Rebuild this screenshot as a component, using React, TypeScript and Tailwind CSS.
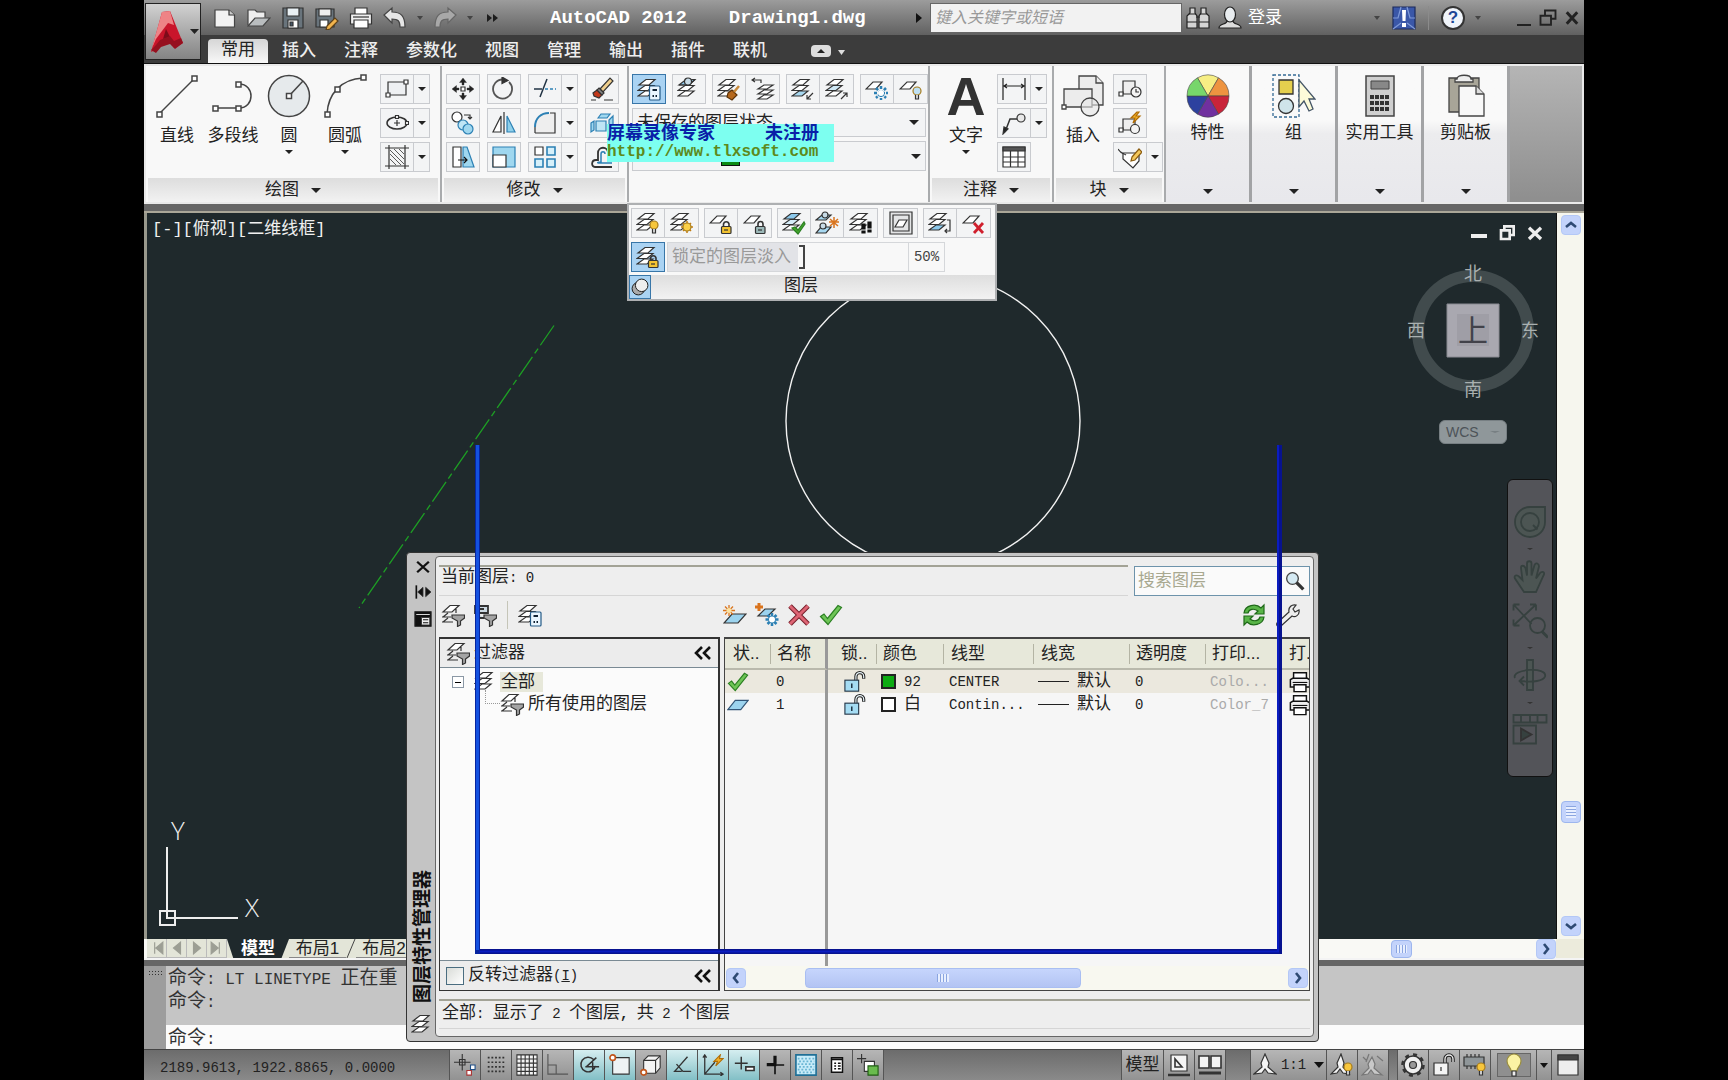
import React from 'react';
import clsx from 'clsx';

interface IconProps {
  className?: string;
}

interface SheetsProps extends IconProps {
  fills?: [string, string, string];
  children?: React.ReactNode;
}

/* Shared svg wrapper, 24 unit grid */
const Svg: React.FC<{ className?: string; children: React.ReactNode }> = ({ className = 'w-6 h-6', children }) => (
  <svg viewBox="0 0 24 24" className={clsx('shrink-0', className)} fill="none" stroke="#333" strokeWidth="1.2" aria-hidden="true">
    {children}
  </svg>
);

/* Three stacked sheets, the base of every layer icon */
const Sheets: React.FC<SheetsProps> = ({ className, fills = ['#fff', '#fff', '#fff'], children }) => (
  <Svg className={className}>
    <path d="M1 19h10l6-5H8z" fill={fills[2]} />
    <path d="M1 13.500h10l6-5H8z" fill={fills[1]} />
    <path d="M2 8h10l6-5.500H9z" fill={fills[0]} />
    {children}
  </Svg>
);

const OneSheet: React.FC<SheetsProps> = ({ className, fills = ['#fff', '#fff', '#fff'], children }) => (
  <Svg className={className}>
    <path d="M1 12h10l6-7H8z" fill={fills[0]} />
    {children}
  </Svg>
);

const Padlock = ({ open, color = '#f2c230' }: { open?: boolean; color?: string }) => (
  <>
    <path d={open ? 'M15 16v-3a2.500 2.500 0 0 1 5 0v3' : 'M14.500 16v-3a2.800 2.800 0 0 1 5.500 0v3'} strokeWidth="1.6" />
    <rect x="12.500" y="15.500" width="9.500" height="7" rx="1" fill={color} />
    <path d="M15 19h4" />
  </>
);

const Bulb = ({ color = '#f7c63c' }: { color?: string }) => (
  <>
    <circle cx="18" cy="14" r="4" fill={color} stroke="#a67b1b" />
    <path d="M16.500 18v4h3v-4" fill="#ddd" />
  </>
);

const Funnel = () => <path d="M11 12h12.500v3l-4 3v4l-3 1.500v-5.500l-5.500-3z" fill="#a4a4a4" stroke="#333" />;

const FilterIcon: React.FC<IconProps> = ({ className }) => (
  <Svg className={className}>
    <path d="M2 9h9l7-6.500H9zM1 14h9M1 19h11M2 14l5-4M2 19l5-4M15 6v4" fill="#fff" />
    <Funnel />
  </Svg>
);

const PropsIcon: React.FC<IconProps> = ({ className }) => (
  <Sheets className={className}>
    <rect x="12.500" y="9" width="10.500" height="14" rx="1" fill="#eaf6ff" stroke="#245a86" />
    <path d="M15.500 13h4.500M15.500 19h1.500M18.500 19h1.500" stroke="#123" strokeWidth="1.8" />
  </Sheets>
);

const CheckIcon: React.FC<IconProps> = ({ className }) => (
  <Svg className={className}>
    <path d="M1.500 13.500l3.500-2.500 3.500 4.500L19 2.500l3.500 2L9 21.500z" fill="#6ec556" stroke="#2b7f22" />
  </Svg>
);

const Caret: React.FC<IconProps> = ({ className = 'w-2 h-1 text-[#222]' }) => (
  <svg viewBox="0 0 10 5" className={clsx('shrink-0', className)} fill="currentColor" aria-hidden="true" preserveAspectRatio="none">
    <path d="M0 0h10L5 5z" />
  </svg>
);

const OpenLock: React.FC<IconProps> = ({ className }) => (
  <Svg className={className}>
    <path d="M13 11V6a4 4 0 0 1 8.500 0v2.500" stroke="#222" strokeWidth="3.500" />
    <path d="M13 11V6a4 4 0 0 1 8.500 0v2" stroke="#e8f4fa" strokeWidth="1.300" />
    <rect x="1" y="10" width="15" height="12" fill="#a5dcf3" stroke="#234" />
    <path d="M8.500 13.500v5" stroke="#123" strokeWidth="1.500" />
  </Svg>
);

const PrinterIcon: React.FC<IconProps> = ({ className }) => (
  <Svg className={className}>
    <path d="M5 9V2h14v7" fill="#fff" stroke="#111" strokeWidth="1.600" />
    <path d="M1.500 9.500L4 8h16l2.500 1.500v8H1.500z" fill="#eee" stroke="#111" strokeWidth="1.600" />
    <path d="M5.500 15h13v7.500h-13z" fill="#fff" stroke="#111" strokeWidth="1.600" />
    <path d="M4 12.500h16" stroke="#111" />
  </Svg>
);

interface ToolProps {
  label: string;
  active?: boolean;
  split?: boolean;
  children: React.ReactNode;
}

/* Small framed ribbon button, optionally with a flyout arrow */
const Tool: React.FC<ToolProps> = ({ label, active, split, children }) => (
  <div className={clsx('flex h-[30px] shrink-0 border', active ? 'border-[#3876a8] bg-[#aad3f3]' : 'border-[#c9cbcf] bg-[#f3f4f5]', split ? 'w-[50px]' : 'w-[34px]')}>
    <button aria-label={label} className="flex flex-1 items-center justify-center">{children}</button>
    {split && (
      <button aria-label={`${label} ▾`} className="flex w-4 items-center justify-center border-l border-[#c9cbcf]">
        <Caret className="h-1 w-2 text-[#222]" />
      </button>
    )}
  </div>
);

const ToolGroup: React.FC<{ items: { label: string; icon: React.ReactNode }[] }> = ({ items }) => (
  <div className="flex h-[30px] divide-x divide-[#c9cbcf] border border-[#c9cbcf] bg-[#f3f4f5]">
    {items.map((item) => (
      <button key={item.label} aria-label={item.label} className="flex w-[33px] items-center justify-center">{item.icon}</button>
    ))}
  </div>
);

const BigTool: React.FC<{ label: string; arrow?: boolean; children: React.ReactNode }> = ({ label, arrow, children }) => (
  <button className="flex w-14 shrink-0 flex-col items-center">
    {children}
    <span className="mt-2 text-[17px] leading-5 whitespace-nowrap">{label}</span>
    {arrow && <Caret className="mt-1 h-1 w-2 text-[#222]" />}
  </button>
);

const RibbonPanel: React.FC<{ title?: string; width: string; children: React.ReactNode }> = ({ title, width, children }) => (
  <section className={clsx('flex shrink-0 flex-col border-r-2 border-[#a9abad] bg-[#f8f8f8] pt-2', width)}>
    <div className="flex flex-1 gap-[7px] pl-1">{children}</div>
    {title && (
      <button className="mx-[2px] flex h-6 items-center justify-center gap-3 bg-linear-to-b from-[#dddddd] to-[#f2f2f2] text-[17px] leading-5">
        {title}
        <Caret className="h-[5px] w-[10px] text-[#222]" />
      </button>
    )}
  </section>
);

const ClosedPanel: React.FC<{ title: string; children: React.ReactNode }> = ({ title, children }) => (
  <button className="flex w-[86px] shrink-0 flex-col items-center border-r-[3px] border-[#a2a3a5] bg-linear-to-b from-[#f9f9f9] from-40% via-[#ececee] to-[#e8e8ec] pt-1">
    {children}
    <span className="mt-[5px] text-[17px] leading-5 whitespace-nowrap">{title}</span>
    <Caret className="mt-auto mb-2 h-[5px] w-[10px] text-[#222]" />
  </button>
);

const ScrollButton: React.FC<{ label: string; d: string }> = ({ label, d }) => (
  <button aria-label={label} className="flex h-5 w-5 shrink-0 items-center justify-center rounded-sm border border-[#b4c8f6] bg-[#c3d3fb]">
    <svg viewBox="0 0 12 12" className="h-3 w-3" fill="none" stroke="#2e4a73" strokeWidth="2.600"><path d={d} /></svg>
  </button>
);

const TitleBar = () => (
  <header className="flex h-[35px] items-center bg-linear-to-b from-[#9c9c9c] to-[#616161] pl-[69px] pr-[5px]">
    <div className="flex items-center gap-[10px]">
      <button aria-label="新建"><Svg><path d="M2 4h14l5.500 5v12H2z" fill="#f2f2f2" stroke="#444" /><path d="M16 4v5h5.500" fill="#ccc" /></Svg></button>
      <button aria-label="打开"><Svg><path d="M1 19V4h7l2 2h8v5" fill="#eee" stroke="#444" /><path d="M1 20l7-8h15l-7 8z" fill="#b9bdbf" stroke="#444" /></Svg></button>
      <button aria-label="保存"><Svg><path d="M2 2h20v20H2z" fill="#69747c" stroke="#333" /><path d="M6 2h12v8H6z" fill="#e8f0f4" /><path d="M7 14h10v8H7z" fill="#fff" /><path d="M9 16h3v4H9z" fill="#456" /></Svg></button>
      <button aria-label="另存为"><Svg><path d="M1 3h18v18H1z" fill="#69747c" stroke="#333" /><path d="M4 3h12v7H4z" fill="#eee" /><path d="M5 14h8v7H5z" fill="#fff" /><path d="M12 20l8-8 3 3-8 8-4 1z" fill="#f2b44d" stroke="#5c401a" /></Svg></button>
      <button aria-label="打印"><Svg><path d="M6 8V2h12v6" fill="#fff" /><path d="M1.500 8h21v10h-21z" fill="#f0f0f0" /><path d="M5 14h14v8H5z" fill="#fff" /><path d="M4 11h16" /></Svg></button>
      <button aria-label="放弃"><Svg><path d="M1 9l8-7v4c9 0 13 4 13 15h-5c0-6-2-8-8-8v4z" fill="#e6e6e6" stroke="#444" /></Svg></button>
      <Caret className="h-1 w-[6px] text-[#444]" />
      <button aria-label="重做"><Svg><path d="M23 9l-8-7v4C6 6 2 10 2 21h5c0-6 2-8 8-8v4z" fill="#a8a8a8" stroke="#666" /></Svg></button>
      <Caret className="h-1 w-[6px] text-[#444]" />
      <button aria-label="更多"><svg viewBox="0 0 12 8" className="ml-1 h-2 w-3" fill="#1c1c1c"><path d="M0 0l5 4-5 4zM6 0l5 4-5 4z" /></svg></button>
    </div>
    <h1 className="ml-[51px] flex gap-[42px] pt-px font-['Liberation_Mono',monospace] text-[19px] leading-6 font-bold whitespace-nowrap text-white">
      <span>AutoCAD 2012</span>
      <span>Drawing1.dwg</span>
    </h1>
    <svg viewBox="0 0 6 10" className="ml-auto h-[10px] w-[6px]" fill="#111"><path d="M0 0l6 5-6 5z" /></svg>
    <input aria-label="搜索" placeholder="键入关键字或短语" className="ml-2 h-[30px] w-[252px] border border-[#666] bg-[#f2f2f2] px-1 text-[16px] italic placeholder:text-[#999]" />
    <button aria-label="查找" className="ml-1"><Svg><path d="M4 2h5v5l2 3v12H1V10l3-3zM15 2h5v5l3 3v12H13V10l2-3z" fill="#d4d4d4" stroke="#222" /><path d="M3 8h7M14 8h7M1 16h10M13 16h10M10 11h4" stroke="#222" /></Svg></button>
    <button className="ml-2 flex items-center gap-[6px] text-[17px] leading-5 text-white">
      <Svg className="h-6 w-6"><path d="M1 22c0-5 8-3 8-7h6c0 4 8 2 8 7z" fill="#ddd" stroke="#222" /><ellipse cx="12" cy="8.500" rx="5.500" ry="7.500" fill="#e8ecef" stroke="#222" /></Svg>
      登录
    </button>
    <Caret className="ml-[92px] h-1 w-[6px] text-[#444]" />
    <button aria-label="通讯中心" className="ml-3"><Svg><path d="M1 1h22v22H1z" fill="#3a57a8" stroke="#1c2b5c" /><path d="M1 12h5l3-11M23 12h-5l-3-11M1 23l8-6M23 23l-8-6" stroke="#7f9ad8" /><path d="M10 4h4l-.5 11h-3zM10 17h4v4h-4z" fill="#fff" stroke="none" /></Svg></button>
    <span className="ml-3 h-6 w-px bg-[#8b8b8b]" />
    <button aria-label="帮助" className="ml-3 flex h-6 w-6 items-center justify-center rounded-full border-2 border-[#333] bg-[#f0f4fa] text-[17px] leading-5 font-bold text-[#1d4695]">?</button>
    <Caret className="ml-[10px] h-1 w-[6px] text-[#444]" />
    <button aria-label="最小化" className="-mt-1 mr-2 ml-9 h-5 w-[14px] border-b-2 border-[#222]" />
    <button aria-label="还原"><Svg className="h-[18px] w-[18px]"><path d="M8 8V2h14v11h-6M2 9h14v12H2z" stroke="#222" strokeWidth="2.500" /></Svg></button>
    <button aria-label="关闭" className="ml-2"><Svg className="h-[14px] w-[14px]"><path d="M3 2l18 20M21 2L3 22" stroke="#222" strokeWidth="5" /></Svg></button>
  </header>
);

const TABS = ['插入', '注释', '参数化', '视图', '管理', '输出', '插件', '联机'];

const TabRow = () => (
  <nav className="flex h-[29px] items-end border-b border-[#111] bg-[#3c3c3c] pl-16 text-[17px] leading-5 text-[#eee]">
    <button className="h-6 w-[60px] rounded-t-sm bg-linear-to-b from-[#d6d6d6] to-[#f8f8f8] pb-[2px] text-[#222]">常用</button>
    <div className="flex gap-7 pb-[2px] pl-[14px] font-medium">
      {TABS.map((tab) => <button key={tab}>{tab}</button>)}
    </div>
    <button aria-label="最小化功能区" className="mb-[6px] ml-11 flex h-3 w-5 items-center justify-center rounded-sm bg-[#ddd]">
      <svg viewBox="0 0 8 4" className="h-1 w-2" fill="#222"><path d="M0 4l4-4 4 4z" /></svg>
    </button>
    <Caret className="mb-2 ml-[7px] h-[5px] w-[7px] text-[#ddd]" />
  </nav>
);

const MODIFY = [
  { label: '移动', icon: <Svg><path d="M12 1l3.500 4.500H13V8h-2V5.500H8.500zM12 23l-3.500-4.500H11V16h2v2.500h2.500zM1 12l4.500-3.500V11H8v2H5.500v2.500zM23 12l-4.500 3.500V13H16v-2h2.500V8.500z" fill="#222" strokeWidth=".4" /><path d="M10 10h4v4h-4z" fill="#fff" /></Svg> },
  { label: '旋转', icon: <Svg><path d="M17 5a9.500 9.500 0 1 1-6-2.500" stroke="#555" strokeWidth="1.800" /><path d="M10 0l6 3.500-6 3z" fill="#333" /></Svg> },
  { label: '修剪', split: true, icon: <Svg><path d="M1 12h8M7 20L14 2" stroke="#234" strokeWidth="1.500" /><path d="M12 12h11" stroke="#2c80b4" strokeDasharray="3 2" strokeWidth="1.500" /></Svg> },
  { label: '删除', icon: <Svg><path d="M10 12L20 1l3 3-10 11z" fill="#f0cf8d" /><path d="M7 13l5 5-3 3-5-2-1-3z" fill="#c2391b" /><path d="M9 11l5 5-2 2-5-5z" fill="#888" /><path d="M1 23h5M14 23h9" /></Svg> },
  { label: '复制', icon: <Svg><circle cx="6" cy="6" r="5" fill="#fff" /><path d="M13 4h6v4M17 6l2 2 2-2" /><circle cx="12" cy="14" r="5" fill="#bfe5f5" stroke="#2c80b4" /><circle cx="17" cy="18" r="5" fill="#9fd7ef" stroke="#2c80b4" /></Svg> },
  { label: '镜像', icon: <Svg><path d="M9 5v16H1z" fill="#fff" /><path d="M15 5v16h8z" fill="#8fd0ea" stroke="#2c80b4" /><path d="M12 1v22" /></Svg> },
  { label: '圆角', split: true, icon: <Svg><path d="M2 22V16C2 7 8 2 16 2h6v20z" fill="#eee" stroke="none" /><path d="M2 22v-6" /><path d="M2 16C2 7 8 2 16 2" stroke="#2c80b4" strokeWidth="2" /><path d="M17 2h5v20H2" /></Svg> },
  { label: '分解', icon: <Svg><path d="M6 10h10v10H6z" fill="#bfe5f5" stroke="#2c80b4" /><path d="M8 7l3-4h9l-3 4zM19 9l4-4v9l-4 4zM1 12l3-2v9l-3 2z" fill="#9fd7ef" stroke="#2c80b4" /></Svg> },
  { label: '拉伸', icon: <Svg><path d="M2 2h8v20H2z" fill="#fff" /><path d="M12 2h4l7 20H12z" fill="#9fd7ef" stroke="#2c80b4" /><path d="M7 15h9M13 12l3 3-3 3" stroke="#111" /></Svg> },
  { label: '缩放', icon: <Svg><path d="M1 2h22v20H1z" fill="#9fd7ef" stroke="#2c80b4" /><path d="M1 10h13v12H1z" fill="#fff" /></Svg> },
  { label: '阵列', split: true, icon: <Svg><path d="M2 2h8v8H2z" fill="#fff" /><path d="M14 2h8v8h-8zM2 14h8v8H2zM14 14h8v8h-8z" fill="#d6f0fa" stroke="#2c80b4" strokeWidth="1.600" /></Svg> },
  { label: '偏移', icon: <Svg><path d="M22 22H5c-4 0-4-7 1-7h2V8c0-7 10-7 10 0" strokeWidth="1.800" /><path d="M22 18H9c-2 0-2-1 2-1V9c0-3 4-3 4 0" stroke="#2c80b4" strokeWidth="1.500" /></Svg> },
];

const Ribbon = () => (
  <div className="flex h-[140px] border-2 border-[#e9e9e9] bg-linear-to-b from-[#b5b5b5] to-[#8e8e8e]">
    <RibbonPanel title="绘图" width="w-[296px]">
      <div className="-ml-px flex">
        <BigTool label="直线"><svg viewBox="0 0 44 44" className="h-11 w-11" fill="#fff" stroke="#444" strokeWidth="1.500"><path d="M4 40L40 4" /><path d="M2 38h5v5H2zM37 2h5v5h-5z" /></svg></BigTool>
        <BigTool label="多段线"><svg viewBox="0 0 44 44" className="h-11 w-11" fill="none" stroke="#444" strokeWidth="1.500"><path d="M4 34h24c16 0 16-24 0-24" /><path d="M2 32h5v5H2zM25 32h5v5h-5zM25 8h5v5h-5z" fill="#fff" /></svg></BigTool>
        <BigTool label="圆" arrow><svg viewBox="0 0 44 44" className="h-11 w-11" stroke="#444" strokeWidth="1.500"><circle cx="22" cy="22" r="20.500" fill="#e6eaec" /><path d="M22 22L36 7" /><path d="M19.500 19.500h5v5h-5z" fill="#fff" /></svg></BigTool>
        <BigTool label="圆弧" arrow><svg viewBox="0 0 44 44" className="h-11 w-11" fill="none" stroke="#444" strokeWidth="1.500"><path d="M4 40C5 20 18 5 40 4" /><path d="M2 38h5v5H2zM38 1h5v5h-5zM12 13h5v5h-5z" fill="#fff" /></svg></BigTool>
      </div>
      <div className="flex flex-col gap-1">
        <Tool label="矩形" split><Svg><path d="M3 5h18v13H3z" fill="#eef0f2" /><path d="M1 16h4v4H1zM19 3h4v4h-4z" fill="#fff" /></Svg></Tool>
        <Tool label="椭圆" split><Svg><ellipse cx="12" cy="12" rx="10" ry="6" strokeWidth="1.500" /><path d="M12 9v6M9 12h6M10.500 4.500h3v3h-3zM20.500 10.500h3v3h-3z" fill="#fff" /></Svg></Tool>
        <Tool label="图案填充" split><Svg><path d="M4 0v24M20 0v24M0 3h24M0 21h24" /><path d="M5 5l14 14M5 9l11 11M5 14l6 6M9 4l10 10M14 4l5 5" strokeWidth=".8" /></Svg></Tool>
      </div>
    </RibbonPanel>
    <RibbonPanel title="修改" width="w-[187px]">
      <div className="grid grid-cols-[34px_34px_50px_34px] content-start gap-x-[7px] gap-y-1">
        {MODIFY.map((tool) => <Tool key={tool.label} label={tool.label} split={tool.split}>{tool.icon}</Tool>)}
      </div>
    </RibbonPanel>
    <RibbonPanel width="w-[301px]">
      <div className="-ml-px flex flex-col gap-1">
        <div className="flex gap-[6px]">
          <Tool label="图层特性" active><PropsIcon /></Tool>
          <Tool label="置为当前"><Sheets fills={['#8cc9ec', '#fff', '#fff']}><path d="M2 8h10l6-5.500" /><circle cx="11" cy="4.500" r="3.500" fill="#c8dbe6" /></Sheets></Tool>
          <ToolGroup items={[
            { label: '匹配', icon: <Sheets><path d="M11 16l4-3 5 5-5 5-5-3z" fill="#b5681d" stroke="#5c3208" /><path d="M17 15l5-6" strokeWidth="2.500" stroke="#c98a3a" /></Sheets> },
            { label: '上一个', icon: <Svg><path d="M7 22h9l6-4H13zM7 17h9l6-4H13zM7 12h9l6-4H13z" fill="#fff" /><path d="M2 3h8v3M4 1L1 3l3 2" /></Svg> },
          ]} />
          <ToolGroup items={[
            { label: '隔离', icon: <Sheets fills={['#fff', '#fff', '#a8d8f0']}><path d="M22 16l-6 6M16 18v4h4" /></Sheets> },
            { label: '取消隔离', icon: <Sheets fills={['#fff', '#cfe8f5', '#fff']}><path d="M16 22l6-6M18 16h4v4" /></Sheets> },
          ]} />
          <ToolGroup items={[
            { label: '冻结', icon: <OneSheet><path d="M16 9v14M9 16h14M11 11l10 10M21 11L11 21" stroke="#2c80b4" strokeWidth="2.500" strokeDasharray="3 1" /><circle cx="16" cy="16" r="3" fill="#fff" stroke="none" /></OneSheet> },
            { label: '关闭', icon: <OneSheet><Bulb color="#bfe0f2" /></OneSheet> },
          ]} />
        </div>
        <div className="relative flex h-[29px] w-[294px] items-center border border-[#c9cbcf] bg-[#f3f4f5]">
          <select aria-label="图层状态" className="w-full appearance-none pl-1 text-[17px] leading-5"><option>未保存的图层状态</option></select>
          <Caret className="absolute right-[6px] h-[5px] w-[10px] text-[#222]" />
        </div>
        <div className="relative flex h-[30px] w-[294px] items-center border border-[#c9cbcf] bg-[#f3f4f5]">
          <span className="mt-1 ml-[88px] h-4 w-[19px] border border-[#111] bg-[#0a8a14]" />
          <select aria-label="图层" className="flex-1 appearance-none pl-4 font-['Liberation_Mono',monospace] text-[14px]"><option>0</option></select>
          <Caret className="absolute right-1 h-[5px] w-[10px] text-[#222]" />
        </div>
      </div>
    </RibbonPanel>
    <RibbonPanel title="注释" width="w-[124px]">
      <div className="pl-1 -mr-1">
        <BigTool label="文字" arrow><span className="flex h-11 items-center text-[54px] leading-[44px] font-bold text-[#333]">A</span></BigTool>
      </div>
      <div className="flex flex-col gap-1">
        <Tool label="标注" split><Svg><path d="M1 1v22M23 1v22M2 9h20M5 7L2 9l3 2M19 7l3 2-3 2" stroke="#222" /></Svg></Tool>
        <Tool label="引线" split><Svg><path d="M3 21L8 8h8" strokeWidth="1.500" /><path d="M1 23l1-7 4 2z" fill="#222" /><circle cx="19" cy="7" r="4" fill="#e8e8e8" /></Svg></Tool>
        <Tool label="表格"><Svg><path d="M1 2h22v20H1z" fill="#fff" /><path d="M1 2h22v4H1z" fill="#555" /><path d="M1 12h22M1 17h22M8.500 6v16M16 6v16" /></Svg></Tool>
      </div>
    </RibbonPanel>
    <RibbonPanel title="块" width="w-[112px]">
      <div className="-ml-[3px] -mr-[5px]">
        <BigTool label="插入"><svg viewBox="0 0 44 44" className="h-11 w-11" fill="#ececec" stroke="#444" strokeWidth="1.300"><path d="M18 2h17l7 7v22H18z" /><path d="M35 2v7h7" /><path d="M3 15h28v18H3z" /><circle cx="29" cy="33" r="9" fill="#e6e6e699" /><path d="M1 31h4v4H1z" fill="#fff" /></svg></BigTool>
      </div>
      <div className="flex flex-col gap-1">
        <Tool label="创建"><Svg><path d="M5 17V4h12v13H3" fill="#eee" /><circle cx="18" cy="15" r="5" fill="#f4f4f4" /><path d="M18 12v3h3M1 15h4v4H1z" fill="#fff" /></Svg></Tool>
        <Tool label="编辑"><Svg><path d="M5 19V8h12v11H3" fill="#eee" /><circle cx="17" cy="18" r="4.500" fill="#f4f4f4" /><path d="M1 17h4v4H1z" fill="#fff" /><path d="M19 1l-6 6h4l-2 5 7-7h-4l3-4z" fill="#f5b52b" stroke="#b06c05" /></Svg></Tool>
        <Tool label="编辑属性" split><Svg><path d="M5 8h16v8l-6 7-10-9z" fill="#fff" /><path d="M0 4c3 5 5 4 8 6" /><path d="M14 12l7-8 3 3-7 8-4 1z" fill="#f5c85a" stroke="#8b5d11" /></Svg></Tool>
      </div>
    </RibbonPanel>
    <ClosedPanel title="特性">
      <svg viewBox="-22 -22 44 44" className="mt-1 h-11 w-11" stroke="#444" strokeWidth=".6">
        <path d="M0 0L-10.500-18.200A21 21 0 0 1 10.500-18.200z" fill="#f6ee84" />
        <path d="M0 0L10.500-18.200A21 21 0 0 1 21 0z" fill="#ee9440" />
        <path d="M0 0H21A21 21 0 0 1 10.500 18.200z" fill="#c9243a" />
        <path d="M0 0L10.500 18.200A21 21 0 0 1-10.500 18.200z" fill="#70309f" />
        <path d="M0 0L-10.500 18.200A21 21 0 0 1-21 0z" fill="#2d419f" />
        <path d="M0 0H-21A21 21 0 0 1-10.500-18.200z" fill="#77d66b" />
      </svg>
    </ClosedPanel>
    <ClosedPanel title="组">
      <svg viewBox="0 0 44 44" className="mt-1 h-11 w-11" stroke="#333" strokeWidth="1.300">
        <path d="M1 1h26v42H1z" fill="none" stroke="#356a94" strokeDasharray="3 2" />
        <path d="M7 6h14v14H7z" fill="#e5cf4e" />
        <circle cx="14" cy="32" r="7.500" fill="#cfe4ea" />
        <path d="M27 6v27l5-6 5 10 4-2-4-10h6z" fill="#fdfbd9" stroke="#456" />
      </svg>
    </ClosedPanel>
    <ClosedPanel title="实用工具">
      <svg viewBox="0 0 44 44" className="mt-1 h-11 w-11" stroke="#444">
        <path d="M8 2h28v40H8z" fill="#cfcfcf" strokeWidth="1.500" />
        <path d="M13 7h18v8H13z" fill="#888" />
        <path d="M12 23h20M12 29h20M12 35h20" stroke="#333" strokeWidth="4" strokeDasharray="4 1" />
      </svg>
    </ClosedPanel>
    <ClosedPanel title="剪贴板">
      <svg viewBox="0 0 44 44" className="mt-1 h-11 w-11" stroke="#444" strokeWidth="1.300">
        <path d="M5 4h30v34H5z" fill="#a8a598" />
        <path d="M13 5c0-5 14-5 14 0h2v3H11V5z" fill="#eee" />
        <path d="M15 12h17l8 8v22H15z" fill="#f8f8f8" />
        <path d="M32 12v8h8" fill="#ddd" />
      </svg>
    </ClosedPanel>
  </div>
);

/* Slide-out part of the layer panel */
const LayerFlyout = () => (
  <div className="absolute top-[203px] left-[483px] z-10 flex w-[370px] flex-col border-2 border-[#aeb0b2] bg-[#f8f8f8] pt-[3px]">
    <div className="flex gap-[5px] pl-[2px]">
      <ToolGroup items={[
        { label: '打开所有图层', icon: <Sheets><Bulb /></Sheets> },
        { label: '解冻所有图层', icon: <Sheets><path d="M17 10v12M11 16h12M13 12l8 8M21 12l-8 8" stroke="#c47e14" strokeWidth="1.500" /><circle cx="17" cy="16" r="4" fill="#fbd048" stroke="#a67b1b" /></Sheets> },
      ]} />
      <ToolGroup items={[
        { label: '锁定', icon: <OneSheet><Padlock /></OneSheet> },
        { label: '解锁', icon: <OneSheet><Padlock open color="#9cb8b8" /></OneSheet> },
      ]} />
      <ToolGroup items={[
        { label: '更改为当前图层', icon: <Sheets fills={['#8cc9ec', '#d5ecf8', '#fff']}><path d="M10 17l3-1 3 3 6-8 1 2-7 10z" fill="#43a62c" stroke="#2b7f22" /></Sheets> },
        { label: '复制到新图层', icon: <Svg><path d="M1 9h10l5-5H7zM1 22h10l5-6H6z" fill="#a8d8f0" /><circle cx="10" cy="4" r="3" fill="#c8dbe6" /><circle cx="8" cy="15" r="3" fill="#c8dbe6" /><path d="M19 6v11M14 11h10M15 8l8 7M23 8l-8 7" stroke="#d9731c" strokeWidth="1.500" /></Svg> },
        { label: '图层漫游', icon: <Sheets><path d="M13 13h3v5h-3zM13 20h3v2h-3zM19 11h3v6h-3zM19 19h3v2h-3z" fill="#111" stroke="#111" /></Sheets> },
      ]} />
      <ToolGroup items={[{ label: '隔离到当前视口', icon: <Svg><path d="M1 1h22v22H1zM4 4h16v16H4z" fill="#e4e5e6" /><path d="M6 16h8l4-7h-8z" fill="#fff" /></Svg> }]} />
      <ToolGroup items={[
        { label: '合并', icon: <Sheets fills={['#fff', '#fff', '#8cc9ec']}><path d="M19 9h3v11h-4M19 18l-2 2 2 2" /></Sheets> },
        { label: '删除图层', icon: <OneSheet><path d="M12 12l9 10M21 12l-9 10" stroke="#d01f2d" strokeWidth="2.800" /></OneSheet> },
      ]} />
    </div>
    <div className="mt-1 flex gap-[2px] pl-[2px]">
      <Tool label="锁定的图层淡入" active><Sheets fills={['#fff', '#fff', '#fff']}><Padlock /></Sheets></Tool>
      <div className="flex h-[30px] w-[278px] border border-[#d5d7da]">
        <div className="relative flex w-[240px] items-center">
          <label htmlFor="fade" className="absolute left-0 flex h-full w-[130px] items-center bg-[#e2e3e7] pl-1 text-[17px] leading-5 whitespace-nowrap text-[#999]">锁定的图层淡入</label>
          <input id="fade" type="range" defaultValue={56} className="relative h-6 w-full appearance-none bg-transparent [&::-webkit-slider-thumb]:h-6 [&::-webkit-slider-thumb]:w-[6px] [&::-webkit-slider-thumb]:appearance-none [&::-webkit-slider-thumb]:border-y-2 [&::-webkit-slider-thumb]:border-r-2 [&::-webkit-slider-thumb]:border-[#444]" />
        </div>
        <output htmlFor="fade" className="flex flex-1 items-center justify-center border-l border-[#d5d7da] font-['Liberation_Mono',monospace] text-[14px] text-[#444]">50%</output>
      </div>
    </div>
    <div className="mt-[3px] flex h-6 items-stretch bg-linear-to-b from-[#dedede] to-[#f2f2f2]">
      <button aria-label="固定面板" className="flex w-[22px] items-center justify-center border border-[#3876a8] bg-[#aad3f3]">
        <Svg className="h-5 w-5"><circle cx="10" cy="14" r="7.500" fill="#aaa" stroke="#222" /><circle cx="14" cy="10" r="7.500" fill="#eee" stroke="#222" /></Svg>
      </button>
      <h2 className="mr-11 flex-1 text-center text-[17px] leading-[22px]">图层</h2>
    </div>
  </div>
);

const Watermark = () => (
  <div className="absolute top-[124px] left-[463px] z-20 h-[38px] w-[227px] bg-[#7dfff0] leading-[19px] font-bold whitespace-nowrap">
    <p className="flex gap-[50px] text-[18px] text-[#0a1fa8]"><span>屏幕录像专家</span><span>未注册</span></p>
    <p className="font-['Liberation_Mono',monospace] text-[16px] text-[#5e8a1c]">http://www.tlxsoft.com</p>
  </div>
);

const ViewCube = () => (
  <div className="absolute top-[49px] right-[12px] flex flex-col items-center">
    <svg viewBox="0 0 142 138" className="h-[138px] w-[142px]" fill="#a9b0b0" fontSize="18" textAnchor="middle">
      <circle cx="71" cy="69" r="55" fill="none" stroke="#414b4d" strokeWidth="12" />
      <path d="M45 42h52v53H45z" fill="#a9a8b0" stroke="#8a8b92" />
      <path d="M55 52h32v32H55z" fill="#9f9ea6" />
      <text x="71" y="18">北</text>
      <text x="71" y="134">南</text>
      <text x="14" y="75">西</text>
      <text x="128" y="75">东</text>
      <text x="71" y="79" fontSize="30" fill="#42424a">上</text>
    </svg>
    <button className="mt-5 flex h-6 w-[68px] items-center justify-between rounded-md border border-[#777f83] bg-[#8f979a] px-[6px] text-[14px] leading-4 text-[#4d5358]">
      WCS
      <Caret className="h-[2px] w-[10px] text-[#777f83]" />
    </button>
  </div>
);

const NavBar = () => (
  <div className="absolute top-[266px] right-[3px] flex h-[298px] w-[46px] flex-col items-center justify-between rounded-md border border-[#111] bg-[#535459] pt-6 pb-7 text-[#3c4146]">
    <button aria-label="全导航控制盘"><Svg className="h-9 w-9"><path d="M12 2h10v10a10 10 0 1 1-10-10z" stroke="#36413f" fill="#4c5553" /><circle cx="12" cy="12" r="6" stroke="#36413f" /><path d="M14 14l3 3" stroke="#36413f" /></Svg></button>
    <Caret className="h-[2px] w-[6px] text-[#333]" />
    <button aria-label="平移"><Svg className="h-9 w-9"><path d="M8 22L2 13c-1-2 1-3 3-1l2 2L6 6c0-2 2-2 3 0l1 5V3c0-2 3-2 3 0v8l2-7c1-2 3-1 3 1l-2 8 3-4c2-1 3 0 2 2l-5 11z" stroke="#36413f" fill="#4c5553" /></Svg></button>
    <button aria-label="缩放"><Svg className="h-9 w-9"><path d="M1 1l12 13M16 1L1 15M1 1h4M1 1v4M16 1h-4M16 1v4M1 15v-4M1 15h4" stroke="#36413f" /><circle cx="17" cy="15" r="5" stroke="#36413f" /><path d="M20 19l4 4" stroke="#36413f" strokeWidth="2" /></Svg></button>
    <Caret className="h-[2px] w-[6px] text-[#333]" />
    <button aria-label="动态观察"><Svg className="h-9 w-9"><path d="M10 2h4v20h-4z" stroke="#36413f" fill="#4c5553" /><path d="M2 14c-3-6 22-8 20-1-1 3-8 4-16 3M8 13l-3 3 3 3" stroke="#36413f" /></Svg></button>
    <Caret className="h-[2px] w-[6px] text-[#333]" />
    <button aria-label="ShowMotion"><Svg className="h-9 w-9"><path d="M1 2h22v5H1zM6 2v5M12 2v5M17 2v5M1 9h15v12H1z" stroke="#36413f" /><path d="M6 11l7 4-7 4z" fill="#36413f" /></Svg></button>
  </div>
);

const DrawingArea = () => (
  <div className="flex min-h-0 flex-1 border-l-[3px] border-[#98988c]">
    <main className="relative flex-1 overflow-hidden bg-[#1f292c]">
      <svg className="absolute inset-0 h-full w-full" fill="none">
        <path d="M407 112.500L212 395" stroke="#1d9f24" strokeWidth="1.300" strokeDasharray="24 4 6 4" />
        <circle cx="786" cy="208" r="147" stroke="#f2f2f2" strokeWidth="1.400" />
      </svg>
      <p className="absolute top-[7px] left-[5px] font-['Liberation_Mono','Noto_Sans_CJK_SC',monospace] text-[17px] leading-5 text-[#f0f0f0]">[-][俯视][二维线框]</p>
      <div className="absolute top-3 right-[13px] flex items-center gap-3">
        <button aria-label="最小化视口" className="mt-[6px] h-1 w-4 bg-[#eee]" />
        <button aria-label="还原视口"><Svg className="h-4 w-4"><path d="M8 6V2h14v13h-4M3 8h13v13H3z" stroke="#eee" strokeWidth="4" /></Svg></button>
        <button aria-label="关闭视口"><Svg className="h-4 w-4"><path d="M3 4l18 17M21 4L3 21" stroke="#eee" strokeWidth="5" /></Svg></button>
      </div>
      <ViewCube />
      <NavBar />
      <svg className="absolute bottom-3 left-[10px] h-[120px] w-[120px]" viewBox="0 -8 120 120" fill="none" stroke="#eee" strokeWidth="2">
        <path d="M10 32v71h71" />
        <path d="M3 96h15v14H3z" />
        <g fill="#eee" stroke="none" fontSize="26" fontWeight="300" fontFamily="Open Sans, sans-serif">
          <text x="14" y="25">Y</text>
          <text x="88" y="102">X</text>
        </g>
      </svg>
    </main>
    <div className="flex w-7 flex-col items-center border-l border-[#111] bg-[#f6f6ee] pt-[2px] pb-[3px]">
      <ScrollButton label="向上滚动" d="M1 8l5-4 5 4" />
      <div className="flex-1" />
      <div className="h-[22px] w-5 rounded-sm border border-[#9db6ee] bg-[#c3d3fb] p-1">
        <div className="h-full w-full bg-[repeating-linear-gradient(#8aa5e0_0_1px,#e8efff_1px_3px)]" />
      </div>
      <div className="h-[93px]" />
      <ScrollButton label="向下滚动" d="M1 4l5 4 5-4" />
    </div>
  </div>
);

const LayoutTabs = () => (
  <div className="flex h-[21px] border-b-2 border-[#f4f4f4] bg-[#f9f9f5] pl-[3px] text-[17px] leading-[19px]">
    {['M4 1v10M11 1L5 6l6 5z', 'M9 1L3 6l6 5z', 'M3 1l6 5-6 5z', 'M8 1v10M1 1l6 5-6 5z'].map((d) => (
      <button key={d} aria-label="切换布局" className="flex w-5 items-center justify-center border-r border-b border-[#bbb] bg-[#e3e5d8]">
        <svg viewBox="0 0 12 12" className="h-[14px] w-[14px]" fill="#9c9e94" stroke="#9c9e94"><path d={d} /></svg>
      </button>
    ))}
    <div className="flex w-[380px] bg-[#e3e5d8]">
      <button className="w-[62px] bg-[#1f292c] font-bold text-white [clip-path:polygon(0_0,100%_0,88%_100%,10%_100%)]">模型</button>
      <button className="w-[57px] border-b border-[#888]">布局1</button>
      <svg viewBox="0 0 10 19" className="h-[19px] w-[10px]" fill="none" stroke="#444"><path d="M9 0L1 19" /></svg>
      <button className="w-14 border-b border-[#888]">布局2</button>
    </div>
    <div className="ml-auto flex items-center">
      <div className="mr-[124px] h-[18px] w-[21px] rounded-sm border border-[#9db6ee] bg-[#c3d3fb] p-1">
        <div className="h-full w-full bg-[repeating-linear-gradient(90deg,#8aa5e0_0_1px,#e8efff_1px_3px)]" />
      </div>
      <ScrollButton label="向右滚动" d="M4 1l4 5-4 5" />
      <div className="h-full w-[28px] bg-[#ecebdc]" />
    </div>
  </div>
);

const CommandLine = () => (
  <div className="flex border-t-[6px] border-[#666] bg-[#c5c5c5] font-['Liberation_Mono','Noto_Sans_CJK_SC',monospace] text-[#333]">
    <div className="w-[22px] bg-[#9d9d9d] px-1 pt-1">
      <div className="h-[5px] bg-[radial-gradient(#333_40%,transparent_45%)] bg-[length:3px_3px]" />
    </div>
    <div className="flex-1">
      <div className="h-[59px] pt-[2px] pl-[2px] text-[19px] leading-[22px] whitespace-pre">
        <p>命令<span className="text-[16px]">: LT LINETYPE </span>正在重</p>
        <p>命令<span className="text-[16px]">:</span></p>
      </div>
      <div className="flex h-6 items-center bg-[#fbfbfb] pt-1 pl-[2px]">
        <label htmlFor="cmd" className="text-[19px] leading-5">命令<span className="text-[16px]">:</span></label>
        <input id="cmd" className="ml-2 h-5 flex-1 outline-none" />
      </div>
    </div>
  </div>
);

interface StatusToggle {
  label: string;
  on?: boolean;
  icon: React.ReactNode;
}

const TOGGLES: StatusToggle[] = [
  { label: '推断约束', icon: <><path d="M9 0v18M0 9h18M6 6h6v6H6z" /><path d="M18 12h5v5h-5z" fill="#fff" stroke="#1f4e86" /><path d="M14 18h5v5h-5z" fill="#fff" stroke="#a33" /></> },
  { label: '捕捉模式', icon: <path d="M3 4h18M3 9h18M3 14h18M3 19h18" strokeDasharray="2 2" strokeWidth="1.800" /> },
  { label: '栅格显示', icon: <path d="M1 1h22v22H1zM5.500 1v22M10 1v22M14.500 1v22M19 1v22M1 5.500h22M1 10h22M1 14.500h22M1 19h22" fill="#f4f4f4" /> },
  { label: '正交模式', icon: <path d="M1 0v22h22M1 12h9v10" stroke="#555" /> },
  { label: '极轴追踪', on: true, icon: <path d="M17 6a8 8 0 1 0 2 7M8 14h15M9 14L20 4M16 9v9" strokeWidth="1.600" /> },
  { label: '对象捕捉', on: true, icon: <><path d="M4 4h18v18H4z" fill="#eef3f4" /><circle cx="4" cy="4" r="3" fill="#fff" stroke="#c1561d" strokeWidth="1.800" /></> },
  { label: '三维对象捕捉', icon: <><path d="M4 7l5-5h13v13l-5 6H4z" fill="#f4f4f4" /><path d="M4 7h13v14M17 7l5-5" /><circle cx="4" cy="20" r="3" fill="#fff" stroke="#c1561d" strokeWidth="1.800" /></> },
  { label: '对象捕捉追踪', on: true, icon: <path d="M18 3L4 19h18M6 11l7 8" strokeDasharray="14 1" strokeWidth="1.500" /> },
  { label: '动态 UCS', on: true, icon: <><path d="M3 1v21h20M3 22L14 9M1 4l2-3 2 3M20 20l3 2-3 2" strokeWidth="1.400" /><path d="M20 1l-7 7h4l-2 5 8-8h-4z" fill="#f5b52b" stroke="#b06c05" /></> },
  { label: '动态输入', on: true, icon: <><path d="M9 3v14M2 10h14" strokeWidth="1.600" /><path d="M14 14h9v4h-9z" fill="#fff" strokeWidth="1.800" /></> },
  { label: '线宽', icon: <><path d="M12 2v9M3 11.500h10.500" strokeWidth="3.500" stroke="#111" /><path d="M12 11v11M12 12h10" strokeWidth="1.800" stroke="#111" /></> },
  { label: '透明度', icon: <><path d="M1 1h22v22H1z" fill="#c8ecf9" stroke="#1f6f96" strokeWidth="1.800" /><path d="M3 5h18M4.500 8h16.500M3 11h18M4.500 14h16.500M3 17h18M4.500 20h16.500" stroke="#6ab5d3" strokeDasharray="2 2" strokeWidth="2" /></> },
  { label: '快捷特性', icon: <path d="M6 4h12v16H6zM6 6h12M9 10h2M13 10h3M9 13h2M13 13h3M9 16h2M13 16h3" fill="#fff" stroke="#111" strokeWidth="1.600" /> },
  { label: '选择循环', icon: <><path d="M5 0v10M0 5h10" /><path d="M8 8h11v11H8z" fill="#fff" /><path d="M12 13h11v10H12z" fill="#69bb4d" stroke="#1f5c13" /></> },
];

const statusCell = 'flex h-full shrink-0 items-center justify-center border-l border-[#555] bg-linear-to-b from-[#b6b6b6] to-[#929292]';

const StatusBar = () => (
  <footer className="flex h-[31px] items-stretch border-t border-[#444] bg-linear-to-b from-[#6c6c6c] to-[#8a8a8a] text-[#222]">
    <p className="w-[305px] pt-1 pl-4 font-['Liberation_Mono',monospace] text-[14px] leading-7 whitespace-nowrap">2189.9613, 1922.8865, 0.0000</p>
    {TOGGLES.map((t) => (
      <button key={t.label} aria-label={t.label} aria-pressed={!!t.on} className={clsx('flex w-[31px] shrink-0 items-center justify-center border-l border-[#555] bg-linear-to-b', t.on ? 'from-[#d5eef0] to-[#82bfc6]' : 'from-[#b6b6b6] to-[#929292]')}>
        <Svg className="h-[22px] w-[22px]">{t.icon}</Svg>
      </button>
    ))}
    <div className="flex-1 border-l border-[#555]" />
    <button className={clsx(statusCell, 'w-[42px] text-[17px] leading-5')}>模型</button>
    <button aria-label="快速查看布局" className={clsx(statusCell, 'w-[31px]')}><Svg><path d="M4 2h16v16H4z" fill="#f4f4f4" /><path d="M8 6v8h7z" strokeWidth="1.600" /><path d="M1 22h22" strokeWidth="2.500" /></Svg></button>
    <button aria-label="快速查看图形" className={clsx(statusCell, 'w-[31px]')}><Svg><path d="M1 3h10v12H1zM13 3h10v12H13z" fill="#f4f4f4" strokeWidth="1.600" /><path d="M1 20h22" strokeWidth="3" /></Svg></button>
    <div className="w-[25px] border-l border-[#555]" />
    <button className={clsx(statusCell, "w-[76px] gap-1 font-['Liberation_Mono',monospace] text-[14px]")}>
      <Svg><path d="M12 1l4 9-1 4 8 7-8-1-3-4-3 4-8 1 8-7-1-4z" fill="#f4f4f4" /></Svg>1:1<Caret className="ml-1 h-[6px] w-[10px] text-[#111]" />
    </button>
    <button aria-label="注释可见性" className={clsx(statusCell, 'w-[31px]')}><Svg><path d="M11 1l3 9-1 4 6 7-6-1-3-4-3 4-6 1 7-7-1-4z" fill="#f4f4f4" /><Bulb /></Svg></button>
    <button aria-label="自动缩放" className={clsx(statusCell, 'w-[31px]')}><Svg><path d="M11 4l3 7-1 4 8 7-8-1-3-4-3 4-6 1 7-7-1-4zM2 4l4 4M8 1L5 9M16 3l6 5" stroke="#777" fill="#c8c8c8" /></Svg></button>
    <div className="w-[9px] border-l border-[#555]" />
    <button aria-label="切换工作空间" className={clsx(statusCell, 'w-[31px]')}><Svg><circle cx="12" cy="12" r="9" fill="#f0f0f0" stroke="#333" strokeWidth="1.600" /><circle cx="12" cy="12" r="10.500" strokeWidth="2.500" strokeDasharray="4 4.200" /><circle cx="12" cy="12" r="3.500" fill="#999" /></Svg></button>
    <button aria-label="锁定" className={clsx(statusCell, 'w-[31px]')}><Svg><path d="M13 10V6a4 4 0 0 1 8 0v3" stroke="#222" strokeWidth="3.500" /><path d="M13 10V6a4 4 0 0 1 8 0v3" stroke="#eee" strokeWidth="1.300" /><path d="M2 10h14v12H2z" fill="#f4f4f4" /><path d="M9 14v4" /></Svg></button>
    <button aria-label="硬件加速" className={clsx(statusCell, 'w-[31px]')}><Svg><path d="M1 4h20v9H1z" fill="#8f9699" /><path d="M4 1v3M8 1v3M12 1v3M16 1v3M4 13v3M8 13v3M12 13v3" /><Bulb /></Svg></button>
    <button aria-label="隔离对象" className={clsx(statusCell, 'w-[46px]')}>
      <span className="flex h-6 w-[34px] items-center justify-center border border-[#666] bg-[#8f8f8f]"><Svg><path d="M9 18c0-4-4-5-4-10a7 7 0 0 1 14 0c0 5-4 6-4 10z" fill="#fbf3a4" stroke="#9a8e3f" /><path d="M10 18h4v5h-4z" fill="#eee" /></Svg></span>
    </button>
    <button aria-label="状态栏菜单" className={clsx(statusCell, 'w-[15px]')}><Caret className="h-[5px] w-2 text-[#111]" /></button>
    <button aria-label="全屏显示" className={clsx(statusCell, 'w-[33px]')}><Svg><path d="M2 2h20v20H2z" fill="#eee" /><path d="M2 2h20v5H2z" fill="#444" /></Svg></button>
  </footer>
);

const HEADERS: [string, string][] = [
  ['状..', 'w-[46px] pl-2'],
  ['名称', 'w-[57px] pl-[6px] border-r-[3px]'],
  ['锁..', 'w-[49px] pl-[13px]'],
  ['颜色', 'w-[67px] pl-[6px]'],
  ['线型', 'w-[90px] pl-[7px]'],
  ['线宽', 'w-[96px] pl-[7px]'],
  ['透明度', 'w-[76px] pl-[6px]'],
  ['打印...', 'w-[76px] pl-[6px]'],
  ['打.', 'pl-[7px]'],
];

interface Layer {
  name: string;
  color: string;
  swatch: string;
  linetype: string;
  plotStyle: string;
}

const LAYERS: Layer[] = [
  { name: '0', color: '92', swatch: 'bg-[#0cab12]', linetype: 'CENTER', plotStyle: 'Colo...' },
  { name: '1', color: '白', swatch: 'bg-white', linetype: 'Contin...', plotStyle: 'Color_7' },
];

const LayerTable = () => (
  <div className="flex min-w-0 flex-1 flex-col border border-t-2 border-[#444] bg-[#f6f6f6]">
    <table className="w-full table-fixed border-separate border-spacing-0 text-left">
      <thead>
        <tr className="h-[31px] bg-[#e7e8da] text-[17px] leading-5">
          {HEADERS.map(([title, cls], i) => (
            <th key={title} className={clsx('overflow-hidden border-b-2 border-b-[#b9b9ac] border-r-[#999] p-0 font-normal whitespace-nowrap', cls)}>
              <span className={clsx('block', i !== 1 && i !== 8 && 'border-r border-[#b4b4a4]')}>{title}</span>
            </th>
          ))}
        </tr>
      </thead>
      <tbody className="font-['Liberation_Mono','Noto_Sans_CJK_SC',monospace] text-[14px] leading-[22px]">
        {LAYERS.map((layer, i) => (
          <tr key={layer.name} className={clsx('h-[23px] whitespace-nowrap', i === 0 && 'bg-[#ebe8de]')}>
            <td className="p-0 pl-[2px]">
              {i === 0 ? <CheckIcon className="h-[22px] w-[22px]" /> : <Svg className="h-[22px] w-[22px]"><path d="M1 17h14l8-10H9z" fill="#9cd3ee" stroke="#357" /></Svg>}
            </td>
            <td className="border-r-[3px] border-[#999] p-0 pl-[5px]">{layer.name}</td>
            <td className="p-0 pl-4"><OpenLock className="h-[22px] w-[22px]" /></td>
            <td className="p-0 pl-1">
              <span className="flex items-center gap-2">
                <span className={clsx('h-[15px] w-[15px] border-2 border-[#222]', layer.swatch)} />
                <span className={clsx(layer.color === '白' && 'text-[17px]')}>{layer.color}</span>
              </span>
            </td>
            <td className="p-0 pl-[5px]">{layer.linetype}</td>
            <td className="p-0 pl-1">
              <span className="flex items-center gap-2 text-[17px]"><span className="h-px w-[31px] bg-[#222]" />默认</span>
            </td>
            <td className="p-0 pl-[5px]">0</td>
            <td className="p-0 pl-1 text-[#aaa]">{layer.plotStyle}</td>
            <td className="overflow-hidden p-0 pl-[7px]"><PrinterIcon className="h-[22px] w-[22px]" /></td>
          </tr>
        ))}
      </tbody>
    </table>
    <div className="w-[103px] flex-1 border-r-[3px] border-[#999]" />
    <div className="flex h-6 items-center bg-[#f8f8f0] px-px">
      <ScrollButton label="向左滚动" d="M8 1L4 6l4 5" />
      <div className="ml-[59px] flex h-5 w-[276px] items-center justify-center rounded-sm border border-[#a9bef2] bg-linear-to-b from-[#c6d5fc] to-[#b3c4f3]">
        <span className="h-2 w-3 bg-[repeating-linear-gradient(90deg,#8aa5e0_0_1px,#e8efff_1px_3px)]" />
      </div>
      <div className="flex-1" />
      <ScrollButton label="向右滚动" d="M4 1l4 5-4 5" />
    </div>
  </div>
);

const Chevrons = () => (
  <svg viewBox="0 0 18 14" className="h-[14px] w-[18px]" fill="none" stroke="#111" strokeWidth="2.600"><path d="M8 1L2 7l6 6M16 1l-6 6 6 6" /></svg>
);

const FilterPane = () => (
  <div className="flex w-[281px] shrink-0 flex-col border border-t-2 border-r-2 border-[#333] bg-[#fbfbfb] text-[17px] leading-5">
    <div className="flex h-[29px] items-center border-b border-[#7a8a94] bg-[#ececec] pr-[6px] pl-[6px]">
      <FilterIcon />
      <span className="ml-1">过滤器</span>
      <button aria-label="折叠过滤器" className="ml-auto"><Chevrons /></button>
    </div>
    <ul className="flex-1 pt-[3px]">
      <li className="flex h-[22px] items-center pl-3">
        <button aria-label="折叠" className="flex h-3 w-3 items-center justify-center border border-[#8b98a5] bg-white"><span className="h-px w-[6px] bg-black" /></button>
        <Sheets className="ml-[10px] h-6 w-6" />
        <span className="ml-[2px] bg-[#e7e8da] pr-2 pl-px">全部</span>
      </li>
      <li className="flex h-[22px] items-center pl-[45px]">
        <span className="-mt-[14px] h-[14px] w-[15px] border-b border-l border-dotted border-[#999]" />
        <FilterIcon className="h-6 w-6" />
        <span className="ml-1">所有使用的图层</span>
      </li>
    </ul>
    <div className="flex h-[30px] items-center border-t border-[#7a8a94] bg-[#ececec] pr-[6px] pl-[6px]">
      <input id="invert" type="checkbox" className="h-[18px] w-[18px] appearance-none border border-[#4a6d80] bg-linear-to-br from-[#d9dcd8] to-white" />
      <label htmlFor="invert" className="ml-1">反转过滤器<span className="font-['Liberation_Mono',monospace] text-[14px]">(<u>I</u>)</span></label>
      <button aria-label="折叠过滤器树" className="ml-auto"><Chevrons /></button>
    </div>
  </div>
);

const LayerManager = () => (
  <div role="dialog" aria-label="图层特性管理器" className="absolute top-[552px] right-[265px] bottom-[38px] left-[262px] z-10 flex rounded border border-[#333] bg-[#c4c4c4] pt-[3px] pr-1 pb-1">
    <div className="flex w-7 flex-col items-center gap-[10px] pt-1 pl-[3px]">
      <button aria-label="关闭"><Svg className="h-[14px] w-[14px]"><path d="M2 3l20 18M22 3L2 21" stroke="#111" strokeWidth="4" /></Svg></button>
      <button aria-label="自动隐藏"><Svg className="h-4 w-4"><path d="M2 2v20" stroke="#111" strokeWidth="2.500" /><path d="M4 12l8-7v14zM24 12l-8-7v14z" fill="#111" /></Svg></button>
      <button aria-label="特性"><Svg className="h-[18px] w-[18px]"><path d="M1 2h22v20H1z" fill="#111" /><path d="M3 6h18" stroke="#eee" /><path d="M10 10h11v10H10z" fill="#eee" /><path d="M12 13h7M12 17h7" stroke="#111" strokeWidth="1.600" /></Svg></button>
      <h2 className="mt-auto rotate-180 text-[19px] leading-6 font-bold whitespace-nowrap text-[#111] [text-orientation:sideways] [writing-mode:vertical-rl]">图层特性管理器</h2>
      <Sheets className="h-6 w-6" />
    </div>
    <div className="flex min-w-0 flex-1 flex-col rounded border border-[#666] bg-[#eeeeee] px-[3px] pt-2">
      <div className="flex h-8 items-start gap-[6px]">
        <p className="h-[31px] flex-1 border-t-2 border-b border-t-[#a3a396] border-b-[#d5d5d5] pl-[2px] text-[17px] leading-5">
          当前图层<span className="font-['Liberation_Mono',monospace] text-[14px]">: 0</span>
        </p>
        <div className="mt-px flex h-[30px] w-[176px] items-center border border-[#6d93ab] bg-[#fafafa] pr-1">
          <input aria-label="搜索图层" placeholder="搜索图层" className="min-w-0 flex-1 pl-[3px] text-[17px] leading-5 outline-none placeholder:text-[#a8a890]" />
          <Svg className="h-5 w-5"><circle cx="9" cy="9" r="7" fill="#d5eaf3" stroke="#444" strokeWidth="1.600" /><path d="M14 14l8 8" strokeWidth="4" /></Svg>
        </div>
      </div>
      <div className="flex h-10 items-center pb-1 pl-[2px]">
        <button aria-label="新建特性过滤器"><FilterIcon /></button>
        <button aria-label="新建组过滤器" className="ml-2"><Svg><path d="M2 3h13v7H2zM4 6h7M4 10v5h7" fill="#ccd9e2" strokeWidth="1.800" /><Funnel /></Svg></button>
        <span className="mx-[10px] h-7 w-px bg-[#c5c5b8]" />
        <button aria-label="图层状态管理器"><PropsIcon /></button>
        <div className="ml-[181px] flex gap-2">
          <button aria-label="新建图层"><Svg><path d="M1 20h14l8-9H9z" fill="#9cd3ee" /><path d="M6 2v11M0 7.500h12M2 3.500l8 8M10 3.500l-8 8" stroke="#d9731c" strokeWidth="1.300" /><circle cx="6" cy="7.500" r="2.500" fill="#fbe3a0" stroke="none" /></Svg></button>
          <button aria-label="在所有视口中冻结的新图层"><Svg><path d="M3 13h10l7-7H10z" fill="#9cd3ee" /><path d="M4 0v8M0 4h8" stroke="#d9731c" strokeWidth="3" /><path d="M17 10v13M10.500 16.500h13M12.500 12l9 9M21.500 12l-9 9" stroke="#2c80b4" strokeWidth="2.500" /><circle cx="17" cy="16.500" r="3" fill="#fff" stroke="none" /></Svg></button>
          <button aria-label="删除图层"><Svg><path d="M3 3l18 18M21 3L3 21" stroke="#76202b" strokeWidth="5" /><path d="M3 3l18 18M21 3L3 21" stroke="#dd6474" strokeWidth="3" /></Svg></button>
          <button aria-label="置为当前"><CheckIcon /></button>
        </div>
        <button aria-label="刷新" className="ml-auto"><Svg><path d="M2 10C3 2 14 0 19 5l3-3v9h-9l3-3C12 5 7 6 6 10zM22 14c-1 8-12 10-17 5l-3 3v-9h9l-3 3c4 3 9 2 10-2z" fill="#59b548" stroke="#1e6818" /></Svg></button>
        <button aria-label="设置" className="mr-[10px] ml-[10px]"><Svg><path d="M1 20L13 9c-1-5 3-8 7-7l-3 4 2 3 4-2c1 5-4 8-7 6L5 23c-3 2-5-1-4-3z" fill="#eee" /></Svg></button>
      </div>
      <div className="flex min-h-0 flex-1 gap-1">
        <FilterPane />
        <LayerTable />
      </div>
      <p className="mt-2 mb-[7px] h-[30px] border-t-2 border-b border-t-[#a3a396] border-b-[#d5d5d5] pl-[3px] text-[17px] leading-6 whitespace-nowrap">
        全部<span className="font-['Liberation_Mono',monospace] text-[14px]">: </span>显示了
        <span className="font-['Liberation_Mono',monospace] text-[14px]"> 2 </span>个图层<span className="font-['Liberation_Mono',monospace] text-[14px] font-bold">, </span>共
        <span className="font-['Liberation_Mono',monospace] text-[14px]"> 2 </span>个图层
      </p>
    </div>
  </div>
);

const App: React.FC = () => (
  <div className="bg-black px-36">
    <div className="relative flex h-screen flex-col overflow-hidden bg-[#6b6b68] font-['Liberation_Sans','Noto_Sans_CJK_SC',sans-serif] text-[#222]">
      <TitleBar />
      <TabRow />
      <button aria-label="应用程序菜单" className="absolute top-[3px] left-px flex h-[57px] w-14 items-center gap-1 border border-[#222] bg-linear-to-b from-[#d2d2d2] to-[#848484] pl-1">
        <svg viewBox="0 0 36 46" className="h-[46px] w-9">
          <path d="M12 3l8-1 13 32-9 5-5-9-8 3-4 7-6 3z" fill="#c9152b" />
          <path d="M12 3l8-1 4 14-6-2-12 16-4 9z" fill="#ee8386" />
          <path d="M16 20l4 8-7 2z" fill="#7d0c1a" />
          <path d="M1 41l5 3 5-6 9-3 5 5 8-6-2-5-7 3-4-5-10 4-4 5z" fill="#96101f" />
        </svg>
        <Caret className="h-[5px] w-[9px] text-[#222]" />
      </button>
      <Ribbon />
      <div className="h-[9px] shrink-0 border-b-2 border-[#aaa698] bg-[#666]" />
      <DrawingArea />
      <LayoutTabs />
      <CommandLine />
      <StatusBar />
      <LayerFlyout />
      <Watermark />
      <LayerManager />
      {/* Selection polyline drawn over the palette */}
      <svg className="pointer-events-none absolute inset-0 z-20 h-full w-full" fill="none" strokeWidth="5">
        <path d="M333.500 951.500H1135.500V445" stroke="#07128f" />
        <path d="M333.500 445V954" stroke="#07259f" />
        <path d="M333.500 445V950" stroke="#1451e0" strokeWidth="3" />
        <path d="M335 951.500H1134V445" stroke="#0a1cc0" strokeWidth="2" />
      </svg>
    </div>
  </div>
);

export default App;
